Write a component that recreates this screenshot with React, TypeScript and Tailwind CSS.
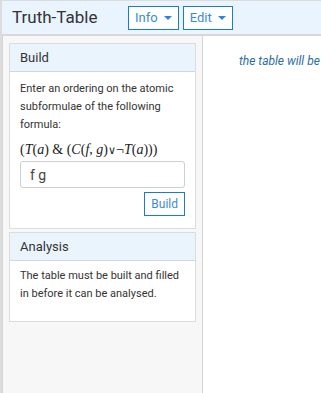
import React from "react";

function Caret() {
  return (
    <svg width="8" height="4" viewBox="0 0 8 4" className="ml-[6px] inline-block">
      <path d="M0 0 L8 0 L4 4 Z" fill="#2a86dc" />
    </svg>
  );
}

function MenuButton({ label }: { label: string }) {
  return (
    <button className="flex h-[24px] items-center border-[1.5px] border-[#1a7bd6] bg-white px-[6px] text-[13px] text-[#3b8cd6]">
      {label}
      <Caret />
    </button>
  );
}

function Panel({ title, children }: { title: string; children: React.ReactNode }) {
  return (
    <div className="border border-[#dcdcdc] bg-white">
      <div className="flex h-[28px] items-center border-b border-[#cfd8e0] bg-[#eaf4fd] px-[10px] text-[13px] text-[#333]">
        {title}
      </div>
      <div className="px-[10px] pt-[8px] pb-[12px] text-[11px] leading-[18px] text-[#333]">{children}</div>
    </div>
  );
}

export default function App() {
  return (
    <div
      className="flex h-[393px] w-[321px] flex-col overflow-hidden border-t border-l-2 border-[#dcdcdc] bg-white"
      style={{ fontFamily: "Roboto, 'Liberation Sans', sans-serif" }}
    >
      <div className="flex h-[35px] shrink-0 items-center border-b-2 border-[#d8d8d8] bg-[#eaf4fe] pl-[10px]">
        <span className="w-[116px] text-[17px] text-[#333]">Truth-Table</span>
        <div className="flex gap-[4px]">
          <MenuButton label="Info" />
          <MenuButton label="Edit" />
        </div>
      </div>
      <div className="flex flex-1">
        <div className="flex w-[201px] shrink-0 flex-col gap-[3px] border-x border-[#d4d4d4] bg-[#f7f7f7] pt-[7px] pr-[6px] pl-[6px]">
          <Panel title="Build">
            <p>Enter an ordering on the atomic subformulae of the following formula:</p>
            <p
              className="mt-[6px] whitespace-nowrap text-[14px] leading-[20px] text-[#222]"
              style={{ fontFamily: "'Liberation Serif', 'DejaVu Serif', serif" }}
            >
              (<i>T</i>(<i>a</i>) &amp; (<i>C</i>(<i>f</i>, <i>g</i>)<span className="text-[11px]">∨</span>¬<i>T</i>(<i>a</i>)))
            </p>
            <div className="mt-[1px] flex h-[27px] items-center rounded-[3px] border border-[#cfcfcf] px-[9px] text-[14px] text-[#444]">
              f g
            </div>
            <div className="mt-[4px] flex justify-end">
              <button className="flex h-[24px] items-center border-[1.5px] border-[#1a7bd6] bg-white px-[6px] text-[12px] text-[#3b8cd6]">
                Build
              </button>
            </div>
          </Panel>
          <Panel title="Analysis">
            <p className="-mt-[2px] pb-[6px]">The table must be built and filled in before it can be analysed.</p>
          </Panel>
        </div>
        <div className="flex-1 pt-[16px] pl-[36px]">
          <p className="whitespace-nowrap text-[12px] italic text-[#2c6ea3]">the table will be</p>
        </div>
      </div>
    </div>
  );
}
